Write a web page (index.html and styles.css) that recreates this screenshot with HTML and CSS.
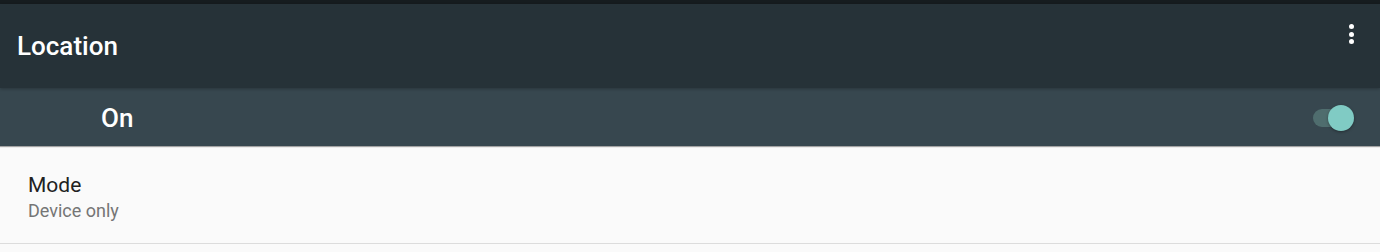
FILE: index.html
```html
<!DOCTYPE html>
<html>
<head>
<meta charset="utf-8">
<link rel="stylesheet" href="styles.css">
</head>
<body>
<div class="status"></div>
<header class="toolbar">
  <h1 class="title">Location</h1>
  <div class="menu" aria-label="More options">
    <span class="dot"></span><span class="dot"></span><span class="dot"></span>
  </div>
</header>
<div class="switchbar">
  <span class="switch-label">On</span>
  <div class="switch">
    <span class="track"></span>
    <span class="thumb"></span>
  </div>
</div>
<main class="content">
  <div class="item">
    <div class="item-title">Mode</div>
    <div class="item-summary">Device only</div>
  </div>
</main>
</body>
</html>
```
FILE: styles.css
```css
html, body {
  margin: 0;
  padding: 0;
  background: #fafafa;
  font-family: Roboto, "Noto Sans", sans-serif;
  overflow: hidden;
}
.status {
  height: 4px;
  background: #161c1f;
}
.toolbar {
  height: 84px;
  background: #263238;
  display: flex;
  align-items: center;
  justify-content: space-between;
  padding: 0 26px 0 17px;
  position: relative;
  z-index: 2;
  box-shadow: 0 1px 3px rgba(0,0,0,0.25);
}
.title {
  margin: 0;
  font-size: 26px;
  font-weight: 500;
  color: #ffffff;
  line-height: 30px;
}
.menu {
  align-self: flex-start;
  margin-top: 20px;
  display: flex;
  flex-direction: column;
  gap: 2.6px;
  width: 5px;
}
.dot {
  width: 5px;
  height: 5px;
  border-radius: 50%;
  background: #ffffff;
}
.switchbar {
  height: 58px;
  background: #37474f;
  display: flex;
  align-items: center;
  justify-content: space-between;
  padding: 0 26px 0 101px;
  position: relative;
  z-index: 1;
  box-shadow: 0 1px 1px rgba(0,0,0,0.35);
}
.switch-label {
  font-size: 26px;
  font-weight: 500;
  color: #ffffff;
  line-height: 30px;
  margin-top: 2px;
}
.switch {
  position: relative;
  width: 41px;
  height: 26px;
  margin-top: 2px;
}
.track {
  position: absolute;
  left: 0;
  top: 4px;
  width: 36px;
  height: 18px;
  border-radius: 9px;
  background: #547473;
  opacity: 0.85;
}
.thumb {
  position: absolute;
  right: 0;
  top: 0;
  width: 26px;
  height: 26px;
  border-radius: 50%;
  background: #80cbc4;
  box-shadow: 0 1px 3px rgba(0,0,0,0.35);
}
.content {
  padding-top: 2px;
}
.item {
  padding: 24px 28px 21px;
  border-bottom: 1px solid #dcdcdc;
}
.item-title {
  font-size: 21px;
  line-height: 26px;
  color: #212121;
  margin-bottom: 2px;
}
.item-summary {
  font-size: 18px;
  line-height: 22px;
  color: #757575;
}
```
